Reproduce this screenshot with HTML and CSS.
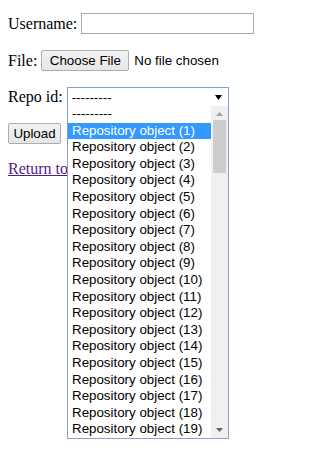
FILE: index.html
```html
<!DOCTYPE html>
<html>
<head>
<meta charset="utf-8">
<title>Upload</title>
<link rel="stylesheet" href="styles.css">
</head>
<body>
<form class="page">
  <div class="row r1">
    <label class="lbl">Username:</label>
    <span class="text-input"></span>
  </div>
  <div class="row r2">
    <label class="lbl">File:</label>
    <span class="btn choose">Choose File</span>
    <span class="nofile">No file chosen</span>
  </div>
  <div class="row r3">
    <label class="lbl">Repo id:</label>
    <span class="select">
      <span class="select-val">---------</span>
      <svg class="caret" width="7" height="5" viewBox="0 0 7 5"><polygon points="0,0 7,0 3.5,5" fill="#000"/></svg>
    </span>
  </div>
  <div class="row r4">
    <span class="btn upload">Upload</span>
  </div>
  <div class="r5"><a class="link" href="#">Return to</a></div>

  <div class="dropdown">
    <ul class="options">
      <li>---------</li>
      <li class="sel">Repository object (1)</li>
      <li>Repository object (2)</li>
      <li>Repository object (3)</li>
      <li>Repository object (4)</li>
      <li>Repository object (5)</li>
      <li>Repository object (6)</li>
      <li>Repository object (7)</li>
      <li>Repository object (8)</li>
      <li>Repository object (9)</li>
      <li>Repository object (10)</li>
      <li>Repository object (11)</li>
      <li>Repository object (12)</li>
      <li>Repository object (13)</li>
      <li>Repository object (14)</li>
      <li>Repository object (15)</li>
      <li>Repository object (16)</li>
      <li>Repository object (17)</li>
      <li>Repository object (18)</li>
      <li>Repository object (19)</li>
    </ul>
    <div class="scrollbar">
      <svg class="sb-arrow" width="7" height="4" viewBox="0 0 7 4"><polygon points="0,4 7,4 3.5,0" fill="#a3a3a3"/></svg>
      <div class="thumb"></div>
      <div class="sb-space"></div>
      <svg class="sb-arrow" width="7" height="4" viewBox="0 0 7 4"><polygon points="0,0 7,0 3.5,4" fill="#606060"/></svg>
    </div>
  </div>
</form>
</body>
</html>
```
FILE: styles.css
```css
html, body {
  margin: 0;
  padding: 0;
  background: #fff;
}
.page {
  position: relative;
  padding: 13px 8px 0 8px;
  font-family: "Liberation Serif", "Times New Roman", serif;
  font-size: 16px;
  color: #000;
  height: 458px;
}
.row {
  display: flex;
  align-items: center;
  gap: 4px;
  height: 21px;
  margin-bottom: 16px;
}
.r3 { height: 20px; }
.lbl { line-height: 18px; white-space: nowrap; }
.text-input {
  display: block;
  box-sizing: border-box;
  width: 173px;
  height: 21px;
  border: 1px solid #a9a9a9;
  background: #fff;
}
.btn {
  display: flex;
  align-items: center;
  justify-content: center;
  box-sizing: border-box;
  height: 21px;
  border: 1px solid #adadad;
  border-radius: 2px;
  background: linear-gradient(#f2f2f2, #e6e6e6);
  font-family: "Liberation Sans", Arial, sans-serif;
  font-size: 13.33px;
  color: #000;
}
.choose { width: 88px; }
.nofile {
  margin-left: 1px;
  font-family: "Liberation Sans", Arial, sans-serif;
  font-size: 13.33px;
}
.upload { width: 53px; height: 21px; }
.select {
  display: flex;
  align-items: center;
  justify-content: space-between;
  box-sizing: border-box;
  width: 162px;
  height: 20px;
  padding: 0 6px 0 4px;
  border: 1px solid #7da2ce;
  background: #fff;
  font-family: "Liberation Sans", Arial, sans-serif;
  font-size: 13.33px;
}
.caret { display: block; }
.r5 {
  line-height: 18px;
  white-space: nowrap;
}
.link {
  color: #551a8b;
  text-decoration: underline;
}
.dropdown {
  position: absolute;
  left: 67px;
  top: 106px;
  width: 162px;
  height: 333px;
  box-sizing: border-box;
  border: 1px solid #8aa2c4;
  border-top: none;
  background: #fff;
  display: flex;
  overflow: hidden;
}
.options {
  list-style: none;
  margin: 0;
  padding: 0;
  flex: 1;
  font-family: "Liberation Sans", Arial, sans-serif;
  font-size: 13.33px;
  color: #000;
}
.options li {
  height: 16.6px;
  line-height: 16.6px;
  padding-left: 4px;
  white-space: nowrap;
}
.options li.sel {
  background: #3399ff;
  color: #fff;
}
.scrollbar {
  width: 17px;
  background: #f0f0f0;
  display: flex;
  flex-direction: column;
  align-items: center;
}
.sb-arrow {
  display: block;
  margin: 6px 0;
}
.thumb {
  width: 13px;
  height: 53px;
  background: #cdcdcd;
  margin-top: -2px;
}
.sb-space { flex: 1; }
```
